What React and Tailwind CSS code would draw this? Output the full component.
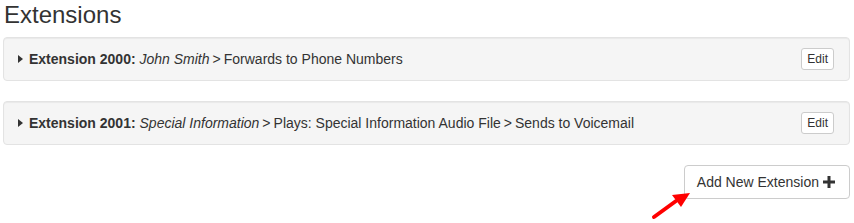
import React from 'react'

const rows = [
  { num: '2000', name: 'John Smith', steps: ['Forwards to Phone Numbers'] },
  { num: '2001', name: 'Special Information', steps: ['Plays: Special Information Audio File', 'Sends to Voicemail'] },
]

function Chevron() {
  return <span className="mx-[3px] inline-block text-[#333]">&gt;</span>
}

function ExtensionRow({ num, name, steps }) {
  return (
    <div className="mb-[20px] flex h-[44px] items-center rounded-[4px] border border-[#e3e3e3] bg-[#f5f5f5] pl-[14px] pr-[15px] shadow-[inset_0_1px_1px_rgba(0,0,0,0.05)]">
      <svg width="6" height="8" viewBox="0 0 6 8" className="mr-[5px]">
        <path d="M0 0 L5 4 L0 8 Z" fill="#333" />
      </svg>
      <div className="flex-1 text-[14px] text-[#333]">
        <b>Extension {num}:</b> <i>{name}</i>
        {steps.map((s, i) => (
          <span key={i}>
            <Chevron />
            {s}
          </span>
        ))}
      </div>
      <button className="h-[22px] rounded-[3px] border border-[#ccc] bg-white px-[5px] text-[12px] leading-[18px] text-[#333]">Edit</button>
    </div>
  )
}

export default function App() {
  return (
    <div className="relative h-[223px] w-[854px] bg-white px-[3px] font-['Liberation_Sans',Arial,sans-serif]" style={{ paddingRight: 4 }}>
      <h3 className="mb-[8px] ml-[1px] pt-[1px] text-[24px] leading-[28px] text-[#333]">Extensions</h3>
      {rows.map(r => <ExtensionRow key={r.num} {...r} />)}
      <div className="flex justify-end">
        <button className="flex h-[34px] items-center gap-[4px] rounded-[4px] border border-[#ccc] bg-white pl-[12px] pr-[14px] text-[14px] text-[#333]">
          Add New Extension
          <svg width="12" height="12" viewBox="0 0 12 12">
            <path d="M4.5 0 H7.5 V4.5 H12 V7.5 H7.5 V12 H4.5 V7.5 H0 V4.5 H4.5 Z" fill="#333" />
          </svg>
        </button>
      </div>
      <svg className="absolute left-[650px] top-[188px]" width="44" height="35" viewBox="0 0 44 35">
        <path d="M4 29 L26 13" stroke="#ff0000" strokeWidth="4" strokeLinecap="round" />
        <path d="M40 5 L22 7 L31 19 Z" fill="#ff0000" />
      </svg>
    </div>
  )
}
